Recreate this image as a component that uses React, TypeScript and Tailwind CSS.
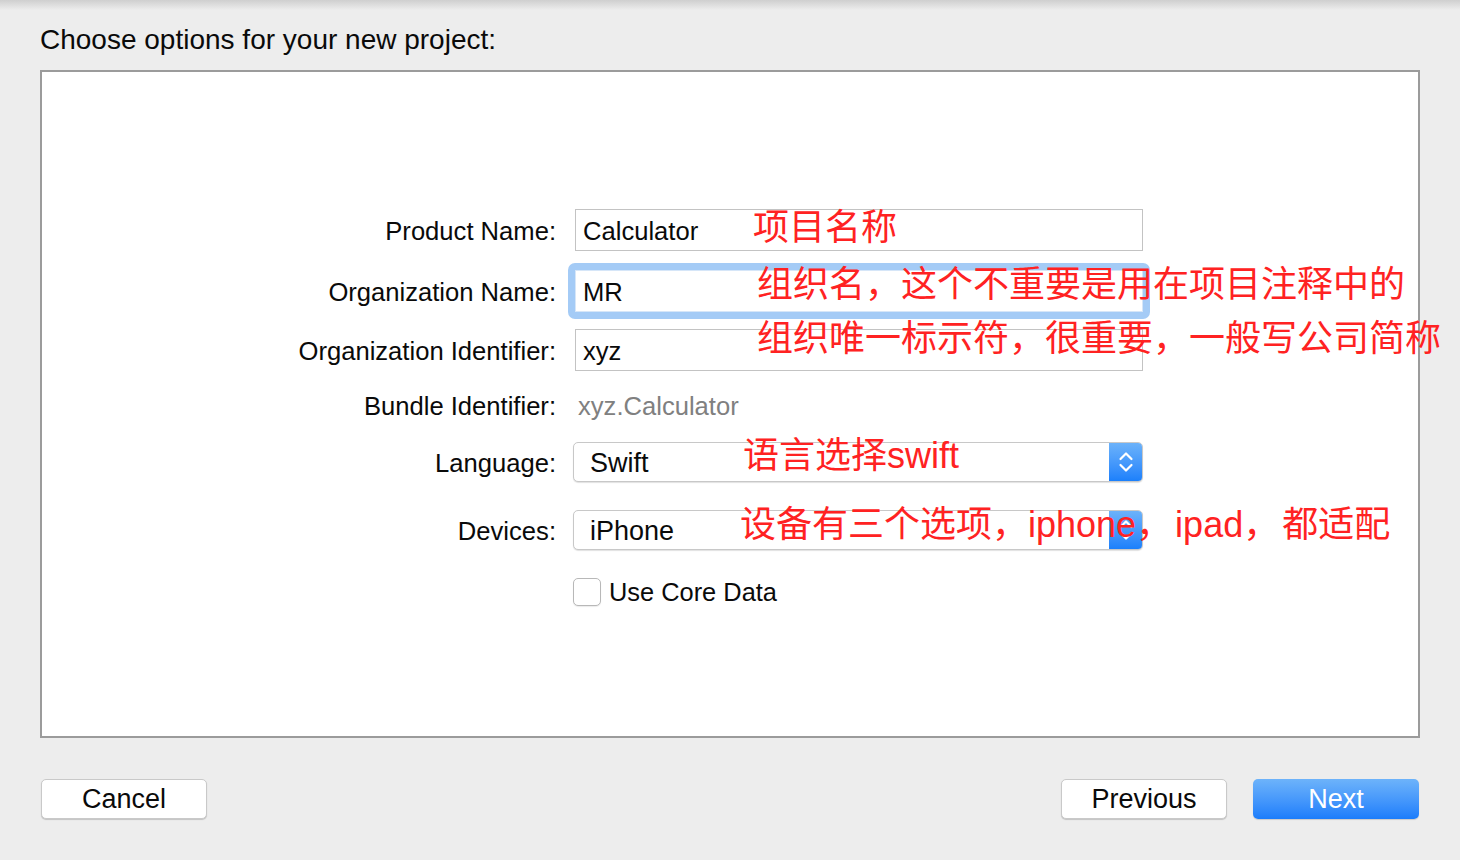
import React from "react";

const FONT = { fontFamily: '"Liberation Sans", Arial, "Noto Sans CJK SC", sans-serif' };
const RED = { fontFamily: '"Liberation Sans", Arial, "Noto Sans CJK SC", sans-serif' };

function Label({ children }: { children: React.ReactNode }) {
  return (
    <div className="w-[514px] shrink-0 pt-[3px] text-right text-[25.6px] leading-none text-[#0a0a0a]">{children}</div>
  );
}

function TextField({ value, focused }: { value: string; focused?: boolean }) {
  return (
    <div className="relative ml-[19px] h-[42px] w-[568px]">
      {focused && <div className="absolute -inset-[7px] rounded-[7px] bg-[#a4cbf6]" />}
      <div
        className={
          "relative flex h-full w-full items-center border bg-white pl-[7px] pt-[3px] text-[25.6px] leading-none text-[#0a0a0a] " +
          (focused ? "border-[#d6e6f8]" : "border-[#c3c3c3]")
        }
      >
        {value}
      </div>
    </div>
  );
}

function Chevrons() {
  return (
    <svg width="16" height="26" viewBox="0 0 16 26" fill="none">
      <path d="M2.5 10 L8 4.5 L13.5 10" stroke="white" strokeWidth="2.2" strokeLinecap="round" strokeLinejoin="round" />
      <path d="M2.5 16 L8 21.5 L13.5 16" stroke="white" strokeWidth="2.2" strokeLinecap="round" strokeLinejoin="round" />
    </svg>
  );
}

function Popup({ value }: { value: string }) {
  return (
    <div className="ml-[17px] flex h-[40px] w-[570px] overflow-hidden rounded-[5px] border border-[#c8c8c8] bg-white shadow-[0_1px_1px_rgba(0,0,0,0.12)]">
      <div className="flex flex-1 items-center pl-[16px] pt-[2px] text-[27px] leading-none text-[#0a0a0a]">{value}</div>
      <div className="flex w-[33px] items-center justify-center bg-gradient-to-b from-[#6bb2fa] to-[#1b80fb]">
        <Chevrons />
      </div>
    </div>
  );
}

function Button({ children, primary, className }: { children: React.ReactNode; primary?: boolean; className?: string }) {
  return (
    <div
      className={
        "flex h-[40px] w-[166px] items-center justify-center rounded-[5px] text-[27px] leading-none " +
        (primary
          ? "bg-gradient-to-b from-[#6db3fa] to-[#1a7dfb] text-white shadow-[0_1px_1px_rgba(0,0,0,0.15)]"
          : "border border-[#c9c9c9] bg-white text-[#0a0a0a] shadow-[0_1px_1px_rgba(0,0,0,0.18)]") +
        " " +
        (className ?? "")
      }
    >
      {children}
    </div>
  );
}

function Note({ children, left, top }: { children: React.ReactNode; left: number; top: number }) {
  return (
    <div
      className="pointer-events-none absolute whitespace-nowrap text-[36px] leading-none text-[#ff2222]"
      style={{ left, top, ...RED }}
    >
      {children}
    </div>
  );
}

export default function App() {
  return (
    <div className="relative flex h-[860px] w-[1460px] flex-col overflow-hidden bg-[#ededed] px-[40px]" style={FONT}>
      <div className="absolute inset-x-0 top-0 h-[10px] bg-gradient-to-b from-[#cfcfcf] to-[#ededed]" />
      <div className="relative h-[70px] pt-[24px] text-[28px] leading-[32px] text-[#0a0a0a]">
        Choose options for your new project:
      </div>

      <div className="flex h-[668px] flex-col border-2 border-[#9b9b9b] bg-white pt-[137px]">
        <div className="flex h-[42px] items-center">
          <Label>Product Name:</Label>
          <TextField value="Calculator" />
        </div>
        <div className="mt-[19px] flex h-[42px] items-center">
          <Label>Organization Name:</Label>
          <TextField value="MR" focused />
        </div>
        <div className="mt-[17px] flex h-[42px] items-center">
          <Label>Organization Identifier:</Label>
          <TextField value="xyz" />
        </div>
        <div className="mt-[17px] flex h-[34px] items-center">
          <Label>Bundle Identifier:</Label>
          <div className="ml-[22px] pt-[3px] text-[25.6px] leading-none text-[#808080]">xyz.Calculator</div>
        </div>
        <div className="mt-[20px] flex h-[40px] items-center">
          <Label>Language:</Label>
          <Popup value="Swift" />
        </div>
        <div className="mt-[28px] flex h-[40px] items-center">
          <Label>Devices:</Label>
          <Popup value="iPhone" />
        </div>
        <div className="mt-[28px] flex h-[28px] items-center">
          <div className="w-[514px] shrink-0" />
          <div className="ml-[17px] h-[28px] w-[28px] rounded-[5px] border border-[#b8b8b8] bg-white shadow-[0_1px_1px_rgba(0,0,0,0.08)]" />
          <div className="ml-[8px] pt-[2px] text-[25.4px] leading-none text-[#0a0a0a]">Use Core Data</div>
        </div>
      </div>

      <div className="mt-[41px] flex items-start justify-between">
        <Button className="ml-[1px]">Cancel</Button>
        <div className="mr-[1px] flex gap-[26px]">
          <Button>Previous</Button>
          <Button primary>Next</Button>
        </div>
      </div>

      <Note left={753} top={210}>项目名称</Note>
      <Note left={757} top={267}>组织名，这个不重要是用在项目注释中的</Note>
      <Note left={757} top={321}>组织唯一标示符，很重要，一般写公司简称</Note>
      <Note left={743} top={438}>语言选择swift</Note>
      <Note left={740} top={507}>
        设备有三个选项，iphone，<span className="ml-[3px]">ipad</span>，<span className="ml-[3px]">都适配</span>
      </Note>
    </div>
  );
}
